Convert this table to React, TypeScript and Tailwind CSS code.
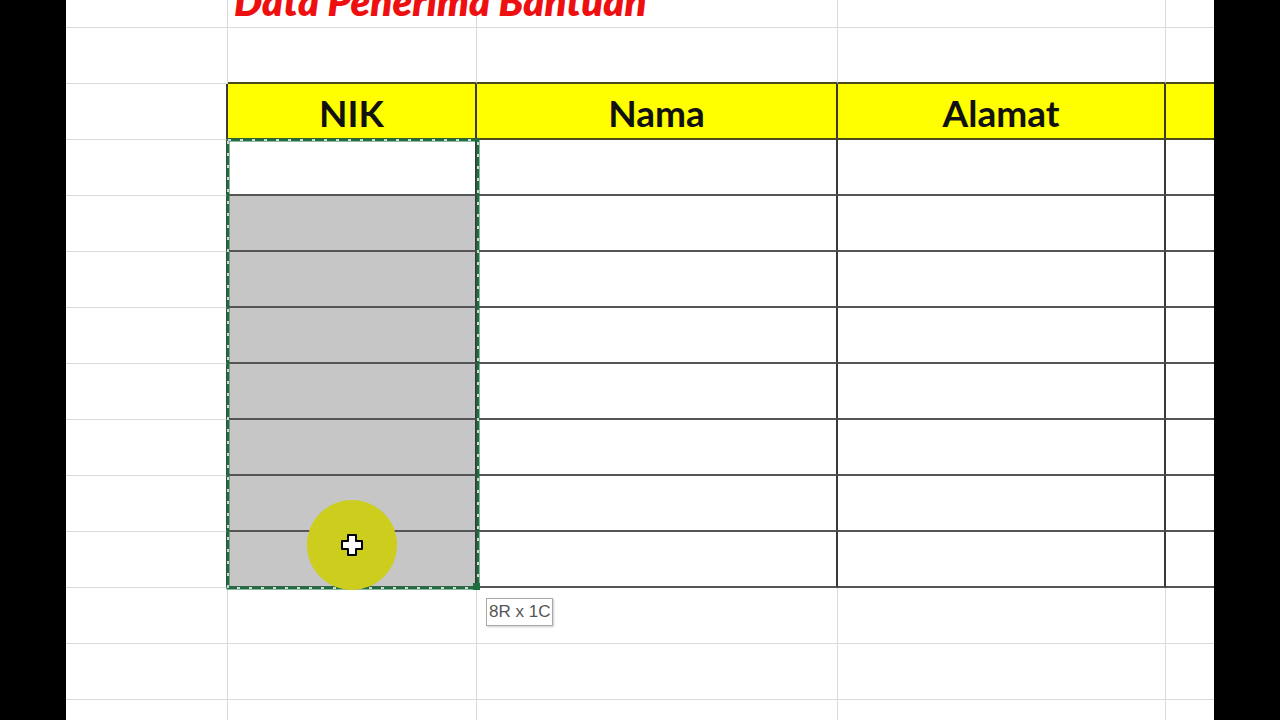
import * as React from "react"

const COLS = [162, 249, 361, 328, 100]
const ROWS = [28, 56, 56, 56, 56, 56, 56, 56, 56, 56, 56, 56, 56, 56]
const HEADERS = ["", "NIK", "Nama", "Alamat", ""]

function cellClass(r: number, c: number) {
  const inTable = r >= 2 && r <= 10
  const darkBottom = r >= 1 && r <= 10 && c >= 1
  const darkRight = inTable && c <= 3
  let cls = "box-border shrink-0 "
  cls += darkBottom
    ? r === 2 || r === 1
      ? "border-b-2 border-b-[#4a4a1a] "
      : "border-b-2 border-b-[#555555] "
    : "border-b border-b-[#dadada] "
  cls += darkRight ? "border-r-2 border-r-[#3a3a3a] " : "border-r border-r-[#dadada] "
  if (r === 2 && c >= 1) cls += "bg-[#ffff00] "
  else if (c === 1 && r >= 4 && r <= 10) cls += "bg-[#c6c6c6] "
  else cls += "bg-white "
  if (r === 0 && c === 1) cls += "relative z-10 "
  return cls
}

function PlusCursor() {
  return (
    <svg width="26" height="26" viewBox="0 0 26 26">
      <path
        d="M9 3h8v6h6v8h-6v6H9v-6H3V9h6z"
        fill="#ffffff"
        stroke="#000000"
        strokeWidth="2"
        strokeLinejoin="round"
      />
    </svg>
  )
}

export default function App() {
  return (
    <div className="flex h-[720px] w-[1280px] overflow-hidden bg-black">
      <div className="w-[66px] shrink-0 bg-black" />
      <div className="relative w-[1148px] shrink-0 overflow-hidden bg-white">
        {ROWS.map((h, r) => (
          <div key={r} className="flex" style={{ height: h }}>
            {COLS.map((w, c) => (
              <div key={c} className={cellClass(r, c)} style={{ width: w, height: h }}>
                {r === 0 && c === 1 && (
                  <div className="-mt-[19px] ml-[6px] whitespace-nowrap font-['Lato',sans-serif] text-[40px] font-extrabold italic leading-[40px] text-[#ee1010]">
                    Data Penerima Bantuan
                  </div>
                )}
                {r === 2 && c >= 1 && c <= 3 && (
                  <div className="flex h-full items-center justify-center pt-[4px] font-['Lato',sans-serif] text-[37px] font-bold text-[#111111]">
                    {HEADERS[c]}
                  </div>
                )}
              </div>
            ))}
          </div>
        ))}

        {/* selection outline */}
        <svg className="absolute left-[160px] top-[138px]" width="254" height="453">
          <rect x="2" y="2" width="250" height="448" fill="none" stroke="#1f6e40" strokeWidth="3" />
          <rect
            x="2"
            y="2"
            width="250"
            height="448"
            fill="none"
            stroke="#ffffff"
            strokeWidth="1.5"
            strokeDasharray="3 9"
          />
          <rect x="247" y="445" width="7" height="7" fill="#1f6e40" />
        </svg>

        {/* cursor highlight */}
        <div className="absolute left-[241px] top-[500px] flex h-[90px] w-[90px] items-center justify-center rounded-full bg-[#cdcd1e]">
          <PlusCursor />
        </div>

        {/* size tooltip */}
        <div className="absolute left-[420px] top-[598px] border border-[#a8a8a8] bg-white px-[2px] font-['Liberation_Sans',sans-serif] text-[17px] leading-[26px] text-[#555555] shadow-[1px_1px_2px_rgba(0,0,0,0.2)]">
          8R x 1C
        </div>
      </div>
      <div className="w-[66px] shrink-0 bg-black" />
    </div>
  )
}
